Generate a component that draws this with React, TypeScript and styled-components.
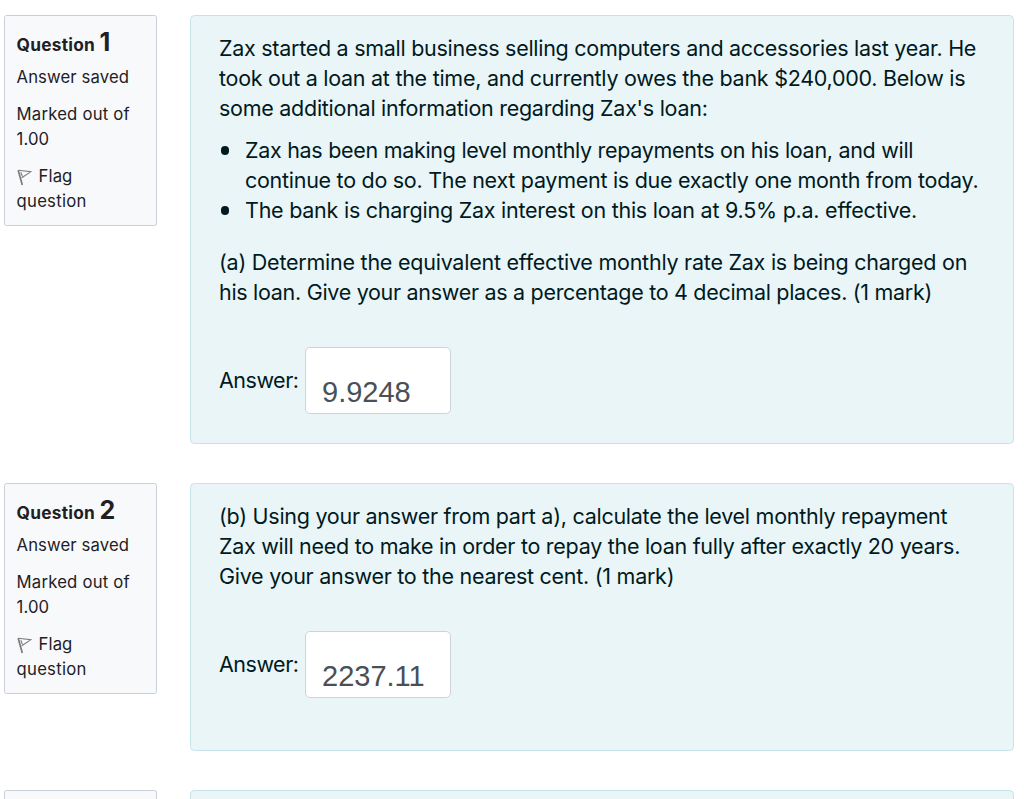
import React from "react";
import styled, { createGlobalStyle } from "styled-components";

const Global = createGlobalStyle`
  * { box-sizing: border-box; }
  body { margin: 0; background: #fff; font-family: Inter, "Liberation Sans", sans-serif; }
`;
const Page = styled.main`
  height: 799px; overflow: hidden; padding: 15px 10px 0 4px;
  display: flex; flex-direction: column; gap: 39px;
`;
const Question = styled.section<{ $height: number }>`
  display: flex; flex: none; align-items: flex-start; justify-content: space-between;
  height: ${p => p.$height}px;
`;
const Info = styled.aside`
  width: 153.4px; height: 210.5px; padding: 12px 11.5px; background: #f8f9fb;
  border: 1px solid #c9cfd8; border-radius: 2.5px; color: #1d2125; font-size: 16.7px;
`;
const Title = styled.h3`
  margin: 0; height: 37.4px; line-height: 28px; font-size: 17.3px; font-weight: 700;
  letter-spacing: 0.25px; white-space: nowrap;
`;
const Num = styled.span` font-size: 25px; letter-spacing: 0; `;
const Line = styled.div<{ $gap?: number; $s?: number }>`
  line-height: 24.7px; white-space: nowrap; margin-bottom: ${p => p.$gap ?? 0}px;
  letter-spacing: ${p => p.$s ?? 0.12}px;
`;
const Flag = styled.svg` width: 15px; height: 17px; margin-right: 7px; vertical-align: -4px; `;
const Content = styled.div`
  width: 824px; height: 100%; padding: 17px 28px; background: #eaf5f8;
  border: 1px solid #c4e4ea; border-radius: 4.5px; color: #001a1e; font-size: 21.5px;
`;
const Row = styled.div<{ $s: number }>`
  height: 30.1px; line-height: 30.1px; white-space: nowrap; letter-spacing: ${p => p.$s}px;
`;
const List = styled.ul` margin: 11.5px 0 21.9px; padding: 0 0 0 26px; list-style: none; `;
const Item = styled.li`
  position: relative;
  &::before {
    content: ""; position: absolute; left: -24.5px; top: 11.5px;
    width: 8.5px; height: 8.5px; border-radius: 50%; background: currentColor;
  }
`;
const Answer = styled.label`
  display: flex; align-items: center; margin-top: 39.4px; line-height: 30px;
`;
const Label = styled.span` width: 86px; letter-spacing: -0.5px; `;
const Input = styled.input`
  width: 146.4px; height: 67px; padding: 25px 16px 0; border: 1px solid #cdd3d9; border-radius: 5px;
  background: #fff; color: #495057; font: 29px "Liberation Sans", sans-serif; outline: none;
`;

function QuestionInfo({ n }: { n: number }) {
  return (
    <Info>
      <Title>Question <Num>{n}</Num></Title>
      <Line $gap={12.3}>Answer saved</Line>
      <Line $s={0.22}>Marked out of</Line>
      <Line $gap={12.3}>1.00</Line>
      <Line>
        <Flag viewBox="0 0 15 17" fill="none" stroke="#7b7b7b">
          <path strokeWidth="1.7" d="M1.2 1.2 5.3 16" />
          <path strokeWidth="1.1" d="M1.2 1.3 14 2.6 4.8 8.8M3.8 3.2 5.3 7.4" />
        </Flag>
        Flag
      </Line>
      <Line $s={0.27}>question</Line>
    </Info>
  );
}

export default function App() {
  return (
    <>
      <Global />
      <Page>
        <Question $height={429}>
          <QuestionInfo n={1} />
          <Content>
            <Row $s={-0.28}>Zax started a small business selling computers and accessories last year. He</Row>
            <Row $s={-0.27}>took out a loan at the time, and currently owes the bank $240,000. Below is</Row>
            <Row $s={-0.27}>some additional information regarding Zax's loan:</Row>
            <List>
              <Item>
                <Row $s={-0.3}>Zax has been making level monthly repayments on his loan, and will</Row>
                <Row $s={-0.28}>continue to do so. The next payment is due exactly one month from today.</Row>
              </Item>
              <Item>
                <Row $s={-0.25}>The bank is charging Zax interest on this loan at 9.5% p.a. effective.</Row>
              </Item>
            </List>
            <Row $s={-0.24}>(a) Determine the equivalent effective monthly rate Zax is being charged on</Row>
            <Row $s={-0.3}>his loan. Give your answer as a percentage to 4 decimal places. (1 mark)</Row>
            <Answer><Label>Answer:</Label><Input defaultValue="9.9248" /></Answer>
          </Content>
        </Question>
        <Question $height={268}>
          <QuestionInfo n={2} />
          <Content>
            <Row $s={-0.27}>(b) Using your answer from part a), calculate the level monthly repayment</Row>
            <Row $s={-0.28}>Zax will need to make in order to repay the loan fully after exactly 20 years.</Row>
            <Row $s={-0.27}>Give your answer to the nearest cent. (1 mark)</Row>
            <Answer><Label>Answer:</Label><Input defaultValue="2237.11" /></Answer>
          </Content>
        </Question>
        <Question $height={267}>
          <Info />
          <Content />
        </Question>
      </Page>
    </>
  );
}
